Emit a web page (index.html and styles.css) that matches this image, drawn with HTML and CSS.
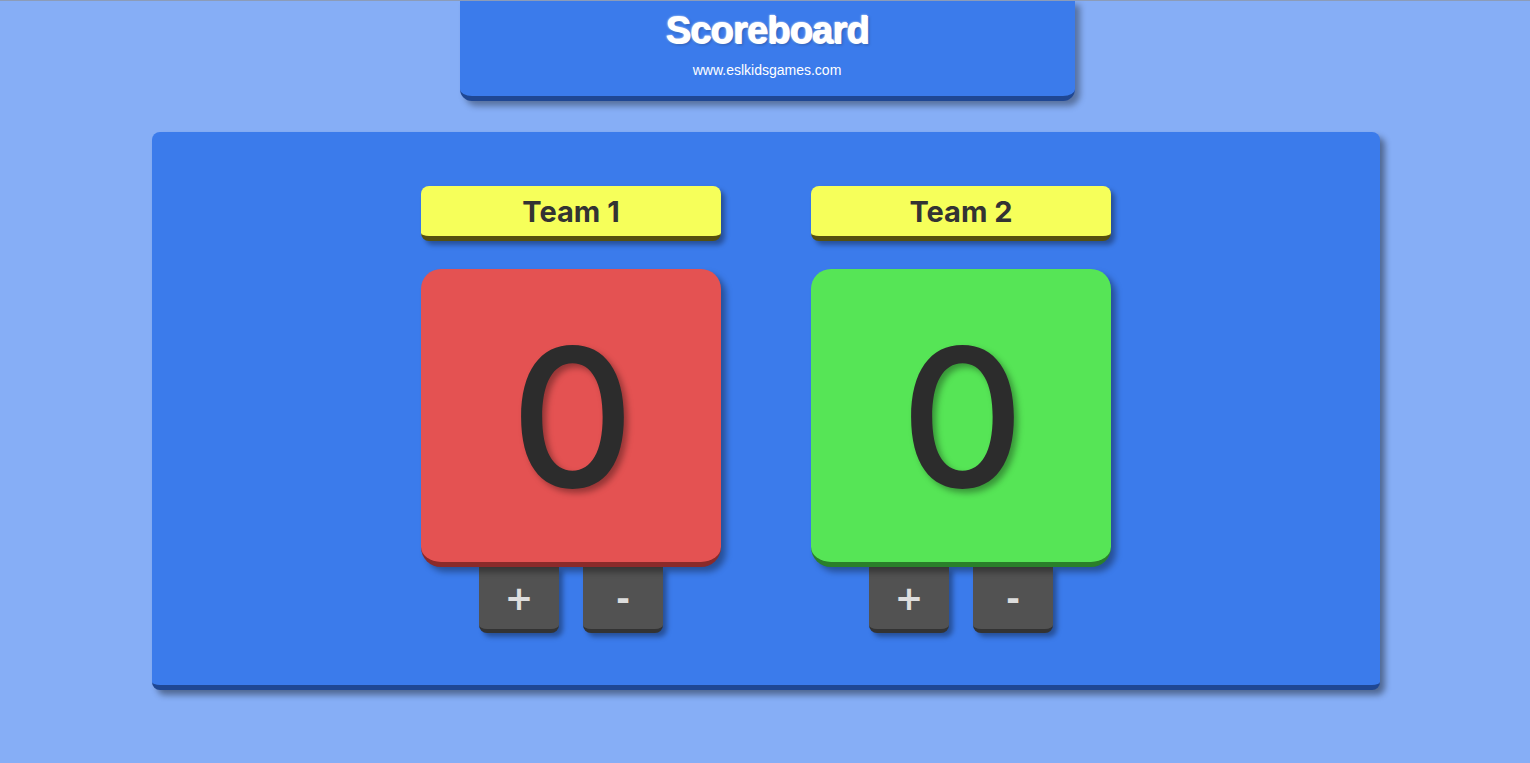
FILE: index.html
```html
<!DOCTYPE html>
<html>
<head>
    <title>Scoreboard</title>
    <link rel="stylesheet" href="styles.css">
</head>
<body>
    <!-- Judul papan skor -->
    <header class="kepala">
        <h1 class="judul">Scoreboard</h1>
        <p class="situs">www.eslkidsgames.com</p>
    </header>

    <main class="papan">
        <!-- Tim 1 -->
        <section class="tim">
            <div class="nama">Team 1</div>
            <div class="skor merah"><span id="skor1">0</span></div>
            <div class="tombol-grup">
                <button class="tombol" onclick="ubahSkor(1, 1)">+</button>
                <button class="tombol" onclick="ubahSkor(1, -1)">-</button>
            </div>
        </section>

        <!-- Tim 2 -->
        <section class="tim">
            <div class="nama">Team 2</div>
            <div class="skor hijau"><span id="skor2">0</span></div>
            <div class="tombol-grup">
                <button class="tombol" onclick="ubahSkor(2, 1)">+</button>
                <button class="tombol" onclick="ubahSkor(2, -1)">-</button>
            </div>
        </section>
    </main>

    <script>
        // Tambah atau kurangi skor tim
        function ubahSkor(tim, nilai) {
            let el = document.getElementById("skor" + tim);
            el.innerText = parseInt(el.innerText) + nilai;
        }
    </script>
</body>
</html>
```

FILE: styles.css
```css
body {
    margin: 0;
    min-height: 100vh;
    background-color: #86aef6;
    border-top: 1px solid #8c9cb8;
    box-sizing: border-box;
    font-family: "Liberation Sans", Arial, sans-serif;
}
.kepala {
    width: 615px;
    height: 96px;
    margin: -1px auto 0 auto;
    background-color: #3b7beb;
    border-bottom: 5px solid #1f4793;
    border-radius: 0 0 12px 12px;
    box-shadow: 5px 5px 6px rgba(0, 0, 0, 0.35);
    text-align: center;
    color: white;
    box-sizing: content-box;
    transform: translateX(2px);
}
.judul {
    margin: 0;
    padding-top: 10px;
    font-size: 38px;
    line-height: 40px;
    font-weight: bold;
    letter-spacing: -0.8px;
    text-shadow: 0 0 2px #fff, 1px 1px 0 #fff, 2px 2px 3px rgba(0, 0, 0, 0.25);
}
.situs {
    margin: 12px 0 0 0;
    font-size: 14px;
}
.papan {
    width: 1228px;
    margin: 31px auto 0 auto;
    padding: 54px 0 52px 0;
    background-color: #3b7beb;
    border-bottom: 5px solid #1f4793;
    border-radius: 8px;
    box-shadow: 5px 5px 6px rgba(0, 0, 0, 0.4);
    display: flex;
    justify-content: center;
    gap: 90px;
    transform: translateX(1px);
}
.tim {
    width: 300px;
    display: flex;
    flex-direction: column;
    align-items: center;
}
.nama {
    width: 100%;
    height: 50px;
    background-color: #f6ff5a;
    border-bottom: 5px solid #55500f;
    border-radius: 8px;
    box-shadow: 4px 4px 5px rgba(0, 0, 0, 0.35);
    color: #333;
    font-family: Inter, "Noto Sans", sans-serif;
    font-weight: bold;
    font-size: 29px;
    line-height: 52px;
    text-align: center;
}
.skor {
    width: 100%;
    height: 293px;
    margin-top: 28px;
    border-radius: 20px;
    box-shadow: 5px 5px 6px rgba(0, 0, 0, 0.35);
    display: flex;
    align-items: center;
    justify-content: center;
    color: #2c2c2c;
    font-family: Inter, Roboto, sans-serif;
    font-weight: 500;
    font-size: 192px;
    line-height: 1;
    text-shadow: 4px 4px 6px rgba(0, 0, 0, 0.35);
    position: relative;
    z-index: 1;
}
.skor span {
    margin: 2px 0 0 3px;
}
.merah {
    background-color: #e45252;
    border-bottom: 5px solid #8a2a2a;
}
.hijau {
    background-color: #56e556;
    border-bottom: 5px solid #2a7f2a;
}
.tombol-grup {
    display: flex;
    gap: 24px;
}
.tombol {
    width: 80px;
    height: 66px;
    padding: 0;
    background-color: #525252;
    border: none;
    border-bottom: 4px solid #333;
    border-radius: 0 0 8px 8px;
    box-shadow: 4px 4px 5px rgba(0, 0, 0, 0.35);
    color: #ddd;
    font-family: "DejaVu Sans", sans-serif;
    font-weight: bold;
    font-size: 34px;
    line-height: 60px;
    cursor: pointer;
}
.tombol:hover {
    background-color: #5e5e5e;
}
```
